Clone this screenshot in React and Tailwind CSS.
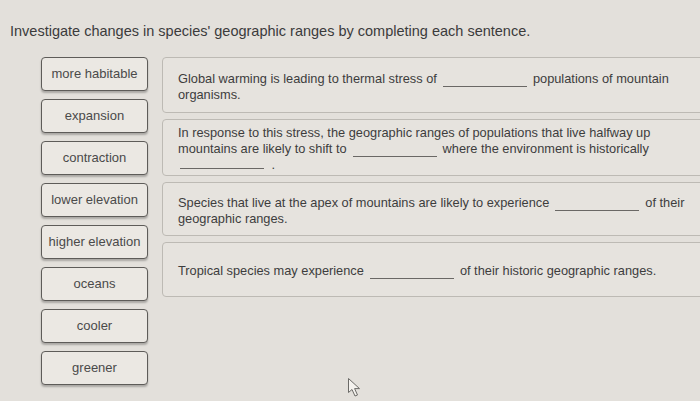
import React from 'react';

const choices = [
  'more habitable',
  'expansion',
  'contraction',
  'lower elevation',
  'higher elevation',
  'oceans',
  'cooler',
  'greener',
];

const Blank = ({ className = 'mx-[6px] align-[-4px]' }) => (
  <span className={`inline-block w-[84px] h-[12px] border-b border-[#6a6865] ${className}`} />
);

const Panel = ({ h, align = 'items-center pt-[3px]', children }) => (
  <div className={`flex ${align} ${h} pl-[15px] pr-[18px] border border-[#bdbab4] rounded-[4px] bg-[#e6e3de]`}>
    <p className="text-[12.8px] leading-[16px] text-[#3d3d3d]">{children}</p>
  </div>
);

const App = () => {
  return (
    <div className="relative w-[700px] h-[401px] overflow-hidden bg-[#e3e0db] font-['Liberation_Sans',Arial,sans-serif]">
      {/* Header */}
      <h1 className="pt-[21px] pl-[10px] text-[14.5px] leading-[20px] text-[#3b3b3b]">
        Investigate changes in species' geographic ranges by completing each sentence.
      </h1>

      <div className="flex mt-[16px]">
        {/* Choices */}
        <div className="ml-[41px] w-[107px] flex flex-col gap-[8px] shrink-0">
          {choices.map((c) => (
            <div
              key={c}
              className="h-[34px] flex items-center justify-center rounded-[4px] border border-[#5e5c59] bg-[#ebe8e3] shadow-[0_2px_2px_rgba(0,0,0,0.25)] text-[13px] text-[#4a4a4a] whitespace-nowrap"
            >
              {c}
            </div>
          ))}
        </div>

        {/* Sentences */}
        <div className="ml-[14px] w-[560px] flex flex-col gap-[6px] shrink-0">
          <Panel h="h-[56px]">
            Global warming is leading to thermal stress of
            <Blank />
            populations of mountain organisms.
          </Panel>
          <Panel h="h-[57px]" align="items-start pt-[5px]">
            <span className="inline-block w-[520px]">
              In response to this stress, the geographic ranges of populations that live halfway up
              mountains are likely to shift to
              <Blank />
              where the environment is historically
            </span>
            <span className="block">
              <Blank className="ml-[2px] mr-[4px] align-baseline" /> .
            </span>
          </Panel>
          <Panel h="h-[54px]">
            Species that live at the apex of mountains are likely to experience
            <Blank />
            of their geographic ranges.
          </Panel>
          <Panel h="h-[55px]">
            Tropical species may experience
            <Blank />
            of their historic geographic ranges.
          </Panel>
        </div>
      </div>

      {/* Mouse cursor */}
      <svg className="absolute left-[347px] top-[377px]" width="16" height="22" viewBox="0 0 16 22">
        <path
          d="M1.5 1.5 L1.5 15.5 L5 12.5 L8 19 L10.5 18 L7.6 11.6 L12.5 11.6 Z"
          fill="#f4f2ee"
          stroke="#6b6a67"
          strokeWidth="1"
          strokeLinejoin="round"
        />
      </svg>
    </div>
  );
};

export default App;
